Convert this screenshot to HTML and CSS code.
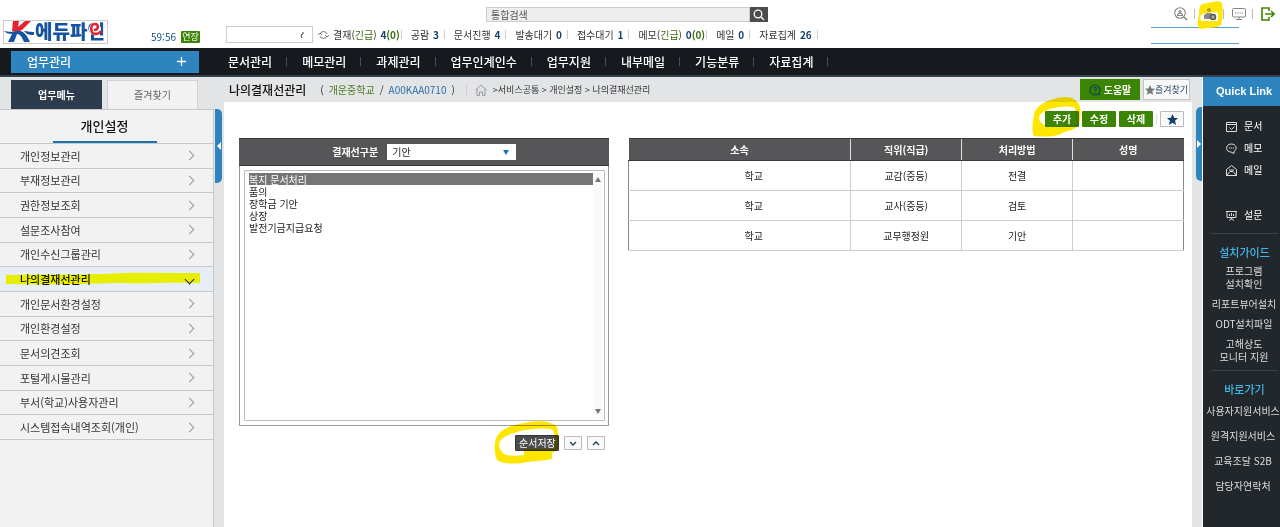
FILE: index.html
```html
<!DOCTYPE html>
<html lang="ko">

<head>
	<meta charset="UTF-8">
	<meta name="viewport" content="width=device-width, initial-scale=1.0">
	<title>나의결재선관리</title>
	<link rel="stylesheet" href="styles.css">
</head>

<body>
	<header class="top">
		<div class="brand">
			<a href="#" class="logo" aria-label="K-에듀파인">
				<svg width="105" height="24" viewBox="0 0 105 24">
					<path d="M10 1h6l-1 6 7-6h6l-9 9-5 2-5-1z" fill="#e5222f" />
					<path d="M1 11c5 1 8 1 13 0 5-1 9 2 13 11h-6c-2-5-4-8-7-8l-3 8H5l4-8c-4 0-6-1-8-3z" fill="#1553a0" />
					<path d="M21 11c3 0 5 1 10 1v3c-4 0-7 0-10-4z" fill="#1553a0" />
					<text x="32" y="19" class="logo-text">에듀파인</text>
					<circle cx="92" cy="9" r="6" fill="#fff" />
					<path d="M91 10c5 0 5-6 1-6-5 0-5 9 0 10 3 0 5-1 6-3" fill="none" stroke="#e5222f" stroke-width="2.6" />
				</svg>
			</a>
			<span class="timer">59:56</span>
			<button type="button" class="extend">연장</button>
		</div>

		<div class="top-middle">
			<form class="search">
				<input type="text" value="통합검색" aria-label="통합검색">
				<button type="button" aria-label="검색">
					<svg width="12" height="12" viewBox="0 0 12 12" fill="none" stroke="#fff" stroke-width="1.3">
						<circle cx="5" cy="5" r="3.8" />
						<path d="M8 8l3 3" />
					</svg>
				</button>
			</form>
			<div class="status">
				<button type="button" class="user-box" aria-label="사용자">
					<svg width="4" height="6" viewBox="0 0 4 6"><path d="M3 0v2L1 3l1 3" fill="none" stroke="#444" /></svg>
				</button>
				<svg class="refresh" width="11" height="10" viewBox="0 0 11 10" fill="none" stroke="#777">
					<path d="M2 4a3.7 3.7 0 0 1 7 0M9 6a3.7 3.7 0 0 1-7 0M0 5l2-2 2 2M7 5l2 2 2-2" />
				</svg>
				<ul class="counts">
					<li class="tight"><a href="#">결재(<em>긴급</em>) <b>4<i>(0)</i></b></a></li>
					<li><a href="#">공람 <b>3</b></a></li>
					<li><a href="#">문서진행 <b>4</b></a></li>
					<li><a href="#">발송대기 <b>0</b></a></li>
					<li><a href="#">접수대기 <b>1</b></a></li>
					<li class="tight"><a href="#">메모(<em>긴급</em>) <b>0<i>(0)</i></b></a></li>
					<li><a href="#">메일 <b>0</b></a></li>
					<li><a href="#">자료집계 <b>26</b></a></li>
				</ul>
			</div>
		</div>

		<div class="top-right">
			<div class="tools">
				<button type="button" aria-label="사용자 찾기">
					<svg width="14" height="14" viewBox="0 0 14 14" fill="none" stroke="#858585" stroke-width="1.1">
						<circle cx="6" cy="6" r="5.3" />
						<path d="M10 10l3 3" stroke-width="1.6" />
						<circle cx="6" cy="4.5" r="1" />
						<path d="M3.5 8.5c0-3 5-3 5 0z" />
					</svg>
				</button>
				<button type="button" class="marked" aria-label="개인설정">
					<svg class="marker-user" width="28" height="30" viewBox="0 0 28 30">
						<path d="M5 4c3-2 8-2 12-3 4-1 7-1 9 1 1 7 1 14-1 22-3 3-11 2-20 4-3-1-4-4-3-9C4 13 2 8 5 4z" fill="#ffe600" />
						<path d="M5 14c4-3 11-2 16-3 2 2 1 6 1 9H6c-2-1-2-4-1-6z" fill="#fff" />
					</svg>
					<svg class="user-icon" width="14" height="14" viewBox="0 0 14 14">
						<circle cx="6" cy="3" r="2" fill="#b39a28" />
						<path d="M1 12V8l3-2h4l3 2v4z" fill="#888" />
						<circle cx="10" cy="10" r="2.5" fill="#aaa" stroke="#555" stroke-width="1.4" />
					</svg>
				</button>
				<button type="button" aria-label="메신저">
					<svg width="14" height="14" viewBox="0 0 14 14" fill="none" stroke="#858585">
						<rect x=".5" y="1.5" width="13" height="8.5" rx="1" />
						<path d="M7 10v2.5M4 12.5h6" />
						<path d="M3 6h8" stroke-dasharray="1.3 1" />
					</svg>
				</button>
				<button type="button" aria-label="로그아웃">
					<svg width="14" height="14" viewBox="0 0 14 14" fill="none" stroke="#3f8505" stroke-width="1.6">
						<path d="M8 4V1H1v12h7v-3M4 7h9M10 4l3 3-3 3" />
					</svg>
				</button>
			</div>
			<div class="top-tab"></div>
		</div>
	</header>

	<nav class="main-nav">
		<button type="button" class="module">업무관리
			<svg width="9" height="9" viewBox="0 0 9 9"><path d="M4.5 0v9M0 4.5h9" stroke="#fff" stroke-width="1.3" /></svg>
		</button>
		<ul>
			<li><a href="#">문서관리</a></li>
			<li><a href="#">메모관리</a></li>
			<li><a href="#">과제관리</a></li>
			<li><a href="#">업무인계인수</a></li>
			<li><a href="#">업무지원</a></li>
			<li><a href="#">내부메일</a></li>
			<li><a href="#">기능분류</a></li>
			<li><a href="#">자료집계</a></li>
		</ul>
	</nav>

	<div class="page">
		<aside class="side">
			<div class="tabs">
				<button type="button" class="tab active">업무메뉴</button>
				<button type="button" class="tab">즐겨찾기</button>
			</div>
			<div class="side-body">
				<div class="menu">
					<h2><span>개인설정</span></h2>
					<ul>
						<li><a href="#">개인정보관리</a></li>
						<li><a href="#">부재정보관리</a></li>
						<li><a href="#">권한정보조회</a></li>
						<li><a href="#">설문조사참여</a></li>
						<li><a href="#">개인수신그룹관리</a></li>
						<li class="current">
							<svg class="marker-row" viewBox="0 0 194 14" preserveAspectRatio="none">
								<path d="M0 3c35-1 70 0 95-1C125 0 160 1 194 1v10c-30-1-50 1-80 0-40 1-75 2-114 1z" fill="#ffff00" />
							</svg>
							<a href="#">나의결재선관리</a>
						</li>
						<li><a href="#">개인문서환경설정</a></li>
						<li><a href="#">개인환경설정</a></li>
						<li><a href="#">문서의견조회</a></li>
						<li><a href="#">포털게시물관리</a></li>
						<li><a href="#">부서(학교)사용자관리</a></li>
						<li><a href="#">시스템접속내역조회(개인)</a></li>
					</ul>
				</div>
				<button type="button" class="fold fold-left" aria-label="메뉴 접기">
					<svg width="4" height="8" viewBox="0 0 4 8"><path d="M4 0v8L0 4z" fill="#fff" /></svg>
				</button>
			</div>
		</aside>

		<main class="content">
			<div class="title-bar">
				<h1>나의결재선관리</h1>
				<p class="org">( <a href="#" class="school">개운중학교</a> / <a href="#" class="code">A00KAA0710</a> )</p>
				<p class="crumbs">
					<svg width="12" height="12" viewBox="0 0 12 12" fill="none" stroke="#999">
						<path d="M.5 6L6 1l5.500 5M2 5v6.500h2.500V8h3v3.500H10V5" />
					</svg>
					&gt;서비스공통 &gt; 개인설정 &gt; 나의결재선관리
				</p>
				<div class="title-buttons">
					<button type="button" class="help">
						<svg width="12" height="12" viewBox="0 0 12 12" fill="none" stroke="#0b4a52" stroke-width="1.2">
							<circle cx="6" cy="6" r="5" />
							<path d="M4.500 4.800c0-2 3-2 3 0 0 1-1.500 1-1.500 2.200M6 8v1.200M9 9.500l2 1.800" />
						</svg>
						도움말
					</button>
					<button type="button" class="favorite">
						<svg width="10" height="10" viewBox="0 0 20 20"><path d="M10 0l3 7 7 .5-5.500 4.800L16.500 20 10 15.800 3.500 20l2-7.700L0 7.500 7 7z" fill="#777" /></svg>즐겨찾기
					</button>
				</div>
			</div>

			<div class="actions">
				<span class="marked">
					<button type="button" class="green">추가</button>
					<svg class="marker-add" width="52" height="42" viewBox="0 0 52 42">
						<path fill-rule="evenodd" d="M3 19C5 8 20 2 34 1c7 0 13 3 15 10 1 7 1 13-2 19-5 5-11 4-17 8-8 3-16 3-27 2C0 34 2 26 3 19zM8 22c0-5 8-9 16-10 8-2 15-2 20 0l1 17c-10 1-20 2-30 1-4-2-7-5-7-8z" fill="#ffe600" />
					</svg>
				</span>
				<button type="button" class="green">수정</button>
				<button type="button" class="green">삭제</button>
				<span class="divider"></span>
				<button type="button" class="star" aria-label="즐겨찾기 추가">
					<svg width="11" height="11" viewBox="0 0 20 20"><path d="M10 0l3 7 7 .5-5.500 4.800L16.500 20 10 15.800 3.500 20l2-7.700L0 7.500 7 7z" fill="#123f6b" /></svg>
				</button>
			</div>

			<div class="panels">
				<section>
					<div class="line-panel">
						<div class="line-head">
							<label for="line-type">결재선구분</label>
							<span class="dropdown">
								<select id="line-type">
									<option>기안</option>
								</select>
								<svg width="6" height="5" viewBox="0 0 6 5"><path d="M0 0h6L3 5z" fill="#1576b5" /></svg>
							</span>
						</div>
						<div class="line-list">
							<select size="5" aria-label="결재선 목록">
								<option selected>복지 문서처리</option>
								<option>품의</option>
								<option>장학금 기안</option>
								<option>상장</option>
								<option>발전기금지급요청</option>
							</select>
							<div class="scroll">
								<svg width="6" height="5" viewBox="0 0 6 5"><path d="M0 5h6L3 0z" fill="#777" /></svg>
								<svg width="6" height="5" viewBox="0 0 6 5"><path d="M0 0h6L3 5z" fill="#777" /></svg>
							</div>
						</div>
					</div>
					<div class="order">
						<span class="marked">
							<button type="button" class="save">순서저장</button>
							<svg class="marker-save" width="66" height="44" viewBox="0 0 66 44">
								<path fill-rule="evenodd" d="M1 22C2 10 16 4 30 2 44-1 58 0 63 6c2 6 1 13 1 21-3 4-5 4-6 5v6c-10 2-20 2-30 4-9 1-20 1-25-3-2-5-3-11-2-17zM5 24c0-7 10-11 21-14 12-2 25-4 33-1 2 3 2 12 1 19H30v6c-7 1-16 1-20-1-3-3-5-6-5-9z" fill="#ffe600" />
							</svg>
						</span>
						<button type="button" class="move" aria-label="아래로">
							<svg width="8" height="5" viewBox="0 0 8 5"><path d="M1 1l3 3 3-3" fill="none" stroke="#123f6b" stroke-width="1.3" /></svg>
						</button>
						<button type="button" class="move" aria-label="위로">
							<svg width="8" height="5" viewBox="0 0 8 5"><path d="M1 4l3-3 3 3" fill="none" stroke="#123f6b" stroke-width="1.3" /></svg>
						</button>
					</div>
				</section>

				<table class="members">
					<thead>
						<tr>
							<th class="wide">소속</th>
							<th>직위(직급)</th>
							<th>처리방법</th>
							<th>성명</th>
						</tr>
					</thead>
					<tbody>
						<tr><td>학교</td><td>교감(중등)</td><td>전결</td><td></td></tr>
						<tr><td>학교</td><td>교사(중등)</td><td>검토</td><td></td></tr>
						<tr><td>학교</td><td>교무행정원</td><td>기안</td><td></td></tr>
					</tbody>
				</table>
			</div>
		</main>

		<div class="gutter">
			<button type="button" class="fold fold-right" aria-label="퀵링크 접기">
				<svg width="4" height="8" viewBox="0 0 4 8"><path d="M0 0v8l4-4z" fill="#fff" /></svg>
			</button>
		</div>

		<aside class="quick">
			<h2>Quick Link</h2>
			<ul class="quick-icons">
				<li><a href="#">
					<svg width="11" height="11" viewBox="0 0 11 11" fill="none" stroke="#ddd"><path d="M.5 1.500h10v9H.5zM.5 3.500h10M3.500 6.500l2 2 3-3" /></svg>문서</a></li>
				<li><a href="#">
					<svg width="11" height="11" viewBox="0 0 11 11" fill="none" stroke="#ddd"><path d="M5.500 1C-1 1-1 9 5 9l3 1.500V8.500C12 6 10 1 5.500 1z" /><path d="M3 5h5" stroke-dasharray="1.200 .7" /></svg>메모</a></li>
				<li><a href="#">
					<svg width="11" height="11" viewBox="0 0 11 11" fill="none" stroke="#ddd"><path d="M.5 4.500l5-4 5 4v6H.5zM.5 10.500l3.500-4h3l3.500 4M3 5h5" /></svg>메일</a></li>
				<li class="survey"><a href="#">
					<svg width="11" height="11" viewBox="0 0 11 11" fill="none" stroke="#ddd"><path d="M0 1.500h11M1 1.500v6h9v-6M5.500 7.500v2M3 10.500l2.500-2 2.500 2M3.500 6V4M5.500 6V3M7.500 6V4" /></svg>설문</a></li>
			</ul>
			<h3>설치가이드</h3>
			<ul class="guide">
				<li><a href="#">프로그램<br>설치확인</a></li>
				<li><a href="#">리포트뷰어설치</a></li>
				<li><a href="#">ODT설치파일</a></li>
				<li><a href="#">고해상도<br>모니터 지원</a></li>
			</ul>
			<h3>바로가기</h3>
			<ul class="shortcuts">
				<li><a href="#">사용자지원서비스</a></li>
				<li><a href="#">원격지원서비스</a></li>
				<li><a href="#">교육조달 S2B</a></li>
				<li><a href="#">담당자연락처</a></li>
			</ul>
		</aside>
	</div>
</body>

</html>
```

FILE: styles.css
```css
:root {
	--blue: #2e84bf;
	--green: #3c8404;
	--dark: #161a1f;
	--panel: #22272c;
	--head: #565658;
	--gray: #e2e4e6;
	--side-width: 224px;
}

* {
	box-sizing: border-box;
}

body {
	display: flex;
	flex-direction: column;
	min-height: 100vh;
	margin: 0;
	font-family: "Noto Sans CJK KR", "Noto Sans", sans-serif;
	font-size: 10px;
	line-height: 12px;
	color: #333;
	background: #fff;
}

h1,
h2,
h3,
p,
ul {
	margin: 0;
	padding: 0;
	list-style: none;
}

a {
	color: inherit;
	text-decoration: none;
}

button,
input,
select {
	margin: 0;
	padding: 0;
	border: 0;
	border-radius: 0;
	background: none;
	font: inherit;
	color: inherit;
}

button {
	cursor: pointer;
}

svg {
	flex: none;
}

/* Header */
.top {
	display: grid;
	grid-template-columns: var(--side-width) 1fr 250px;
	height: 48px;
}

.brand {
	display: flex;
	align-items: flex-end;
	padding: 0 24px 4px 3px;
}

.logo {
	display: flex;
	border: 1px solid #ccc;
	margin-right: auto;
}

.logo svg {
	margin: -1px;
	overflow: visible;
}

.logo-text {
	font-size: 19px;
	font-weight: 900;
	fill: #1553a0;
}

.timer {
	margin-right: 5px;
	color: #14508a;
	line-height: 14px;
}

.extend {
	width: 19px;
	height: 12px;
	margin-bottom: 1px;
	border-radius: 1px;
	background: var(--green);
	color: #fff;
	font-size: 9px;
	line-height: 12px;
}

.top-middle {
	display: flex;
	flex-direction: column;
	padding-top: 7px;
}

.search {
	display: flex;
	align-self: center;
	width: 282px;
	height: 15px;
}

.search input {
	flex: 1;
	min-width: 0;
	padding-left: 4px;
	border: 1px solid #ccc;
	background: #eee;
	color: #555;
}

.search button {
	display: flex;
	align-items: center;
	justify-content: center;
	width: 18px;
	background: #4c4c4f;
}

.status {
	display: flex;
	align-items: center;
	margin-top: 4px;
	padding-left: 2px;
	white-space: nowrap;
}

.user-box {
	display: flex;
	align-items: center;
	justify-content: flex-end;
	width: 87px;
	height: 17px;
	padding-right: 8px;
	border: 1px solid #ccc;
}

.refresh {
	margin: 0 4px 0 5px;
}

.counts {
	display: flex;
	gap: 9px;
}

.counts li {
	padding-right: 5px;
	border-right: 1px solid #ccc;
	line-height: 9px;
}

.counts .tight {
	padding-right: 1px;
}

.counts em,
.counts i {
	font-style: normal;
	color: #3c6b10;
}

.counts b {
	margin-left: 1px;
	color: #15406b;
}

.top-right {
	display: flex;
	flex-direction: column;
	align-items: flex-end;
	padding: 7px 5px 0 0;
}

.tools {
	display: flex;
	align-items: center;
}

.tools button {
	display: flex;
}

.tools button + button {
	margin-left: 6px;
	padding-left: 9px;
	background: linear-gradient(#bbb, #bbb) no-repeat 0 center / 1px 10px;
}

.top-tab {
	width: 88px;
	height: 17px;
	margin: 6px 36px 0 0;
	border: 1px solid #5b9cc8;
	border-width: 1px 0;
}

/* Main navigation */
.main-nav {
	display: flex;
	align-items: center;
	height: 29px;
	border-bottom: 2px solid #34424f;
	background: var(--dark);
	color: #fff;
	font-size: 12px;
	font-weight: 500;
}

.module {
	display: flex;
	align-items: center;
	justify-content: space-between;
	width: 188px;
	height: 22px;
	margin: 0 25px 0 11px;
	padding: 0 13px 0 16px;
	background: var(--blue);
}

.main-nav ul {
	display: flex;
	padding-left: 4px;
}

.main-nav li {
	padding-right: 15px;
	margin-right: 15px;
	background: linear-gradient(#46505a, #46505a) no-repeat right center / 1px 9px;
	line-height: 16px;
}

/* Page */
.page {
	flex: 1;
	display: flex;
	background: var(--gray);
}

.side {
	flex: none;
	display: flex;
	flex-direction: column;
	width: var(--side-width);
}

.tabs {
	display: flex;
	gap: 5px;
	padding: 3px 0 0 11px;
}

.tab {
	width: 91px;
	height: 29px;
	border: 1px solid #d2d2d2;
	border-bottom: 0;
	background: #f2f2f2;
	color: #666;
}

.tab.active {
	border-color: #2c3b4e;
	background: #2c3b4e;
	color: #fff;
	font-weight: bold;
}

.side-body {
	flex: 1;
	display: flex;
}

.menu {
	width: 214px;
	border: solid #c8c8c8;
	border-width: 1px 1px 0 0;
	background: #f2f2f2;
	font-size: 11px;
}

.menu h2 {
	display: flex;
	justify-content: center;
	height: 33px;
	padding-right: 4px;
	font-size: 13px;
	font-weight: 500;
	line-height: 32px;
	color: #111;
}

.menu h2 span {
	width: 104px;
	border-bottom: 2px solid #1b76ae;
	text-align: center;
}

/* rows share the height evenly */
.menu ul {
	display: grid;
	grid-auto-rows: 1fr;
	min-height: 297px;
	border-bottom: 1px solid #c8c8c8;
}

.menu li {
	position: relative;
	display: flex;
	border-top: 1px solid #c8c8c8;
}

.menu li a {
	flex: 1;
	display: flex;
	align-items: center;
	justify-content: space-between;
	padding: 0 20px;
}

.menu li a::after {
	content: "";
	width: 6px;
	height: 6px;
	border: solid #999;
	border-width: 1px 1px 0 0;
	transform: rotate(45deg);
}

.menu .current {
	background: #e8eef8;
	color: #111;
	font-weight: 500;
}

.menu .current a::after {
	border-color: #222;
	transform: rotate(135deg);
}

.fold {
	display: flex;
	align-items: center;
	justify-content: center;
	width: 7px;
	height: 74px;
	background: var(--blue);
}

.fold-left {
	margin-left: 1px;
	border-radius: 0 5px 5px 0;
}

.fold-right {
	margin: 30px 0 0 4px;
	border-radius: 5px 0 0 5px;
}

/* Content */
.content {
	flex: 1;
	min-width: 0;
	background: #fff;
}

.title-bar {
	display: flex;
	align-items: center;
	height: 25px;
	padding-left: 5px;
	background: var(--gray);
	white-space: nowrap;
}

h1 {
	font-size: 12px;
	font-weight: 500;
	line-height: 16px;
	color: #111;
}

.org {
	display: flex;
	gap: 5px;
	margin-left: 14px;
}

.school {
	color: #47791f;
}

.code {
	color: #2a6fa8;
}

.crumbs {
	display: flex;
	align-items: center;
	gap: 6px;
	margin-left: 11px;
	padding-left: 8px;
	border-left: 1px solid #d2d2d2;
	font-size: 9px;
}

.title-buttons {
	display: flex;
	gap: 3px;
	margin-left: auto;
	padding-right: 2px;
}

.help,
.favorite {
	display: flex;
	align-items: center;
	justify-content: center;
	height: 21px;
}

.help {
	gap: 3px;
	width: 60px;
	background: var(--green);
	color: #fff;
	font-weight: bold;
}

.favorite {
	width: 47px;
	border: 1px solid #c4c4c4;
	background: #f8f8f8;
	color: #254b70;
	font-size: 9px;
}

.actions {
	display: flex;
	align-items: center;
	justify-content: flex-end;
	gap: 3px;
	padding: 9px 8px 11px;
}

.green {
	width: 34px;
	height: 16px;
	border-radius: 1px;
	background: var(--green);
	color: #fff;
	font-weight: bold;
}

.divider {
	width: 1px;
	height: 10px;
	background: #ddd;
}

.star,
.move {
	display: flex;
	align-items: center;
	justify-content: center;
	border: 1px solid #bbb;
	border-radius: 1px;
	background: #f9f9f9;
}

.star {
	width: 24px;
	height: 16px;
}

.panels {
	display: grid;
	grid-template-columns: 2fr 3fr;
	gap: 19px;
	align-items: start;
	padding: 0 8px 0 15px;
}

.line-panel {
	border: 1px solid #999;
	border-top: 0;
}

.line-head {
	display: flex;
	align-items: center;
	justify-content: center;
	gap: 9px;
	height: 28px;
	margin: 0 -1px;
	border: solid #39393b;
	border-width: 1px 0;
	background: var(--head);
	color: #fff;
	font-weight: bold;
}

.dropdown {
	display: flex;
	align-items: center;
	width: 129px;
	height: 16px;
	padding-right: 7px;
	background: #fff;
	color: #222;
	font-weight: normal;
}

.dropdown select {
	flex: 1;
	height: 16px;
	padding-left: 5px;
	appearance: none;
}

.line-list {
	display: flex;
	height: 251px;
	margin: 4px 3px 4px 4px;
	padding: 2px 1px 2px 4px;
	border: 1px solid #bbb;
	border-radius: 1px;
}

.line-list select {
	flex: 1;
	min-width: 0;
	overflow: hidden;
	outline: 0;
	color: #222;
}

.line-list option {
	display: flex;
	align-items: center;
	height: 12px;
	min-height: 12px;
	padding: 0;
}

.line-list option:checked {
	background-image: linear-gradient(#757575, #757575);
	-webkit-text-fill-color: #fff;
}

.scroll {
	display: flex;
	flex-direction: column;
	align-items: center;
	justify-content: space-between;
	width: 10px;
	padding: 4px 0;
	background: #fafafa;
}

.order {
	display: flex;
	align-items: center;
	justify-content: flex-end;
	gap: 5px;
	padding: 9px 4px;
}

.save {
	width: 44px;
	height: 16px;
	border: 1px solid #333;
	border-radius: 1px;
	background: #4c4c4f;
	color: #fff;
	line-height: 12px;
}

.move {
	width: 18px;
	height: 14px;
}

.members {
	width: 100%;
	border-collapse: collapse;
	table-layout: fixed;
	color: #222;
	text-align: center;
}

.members th {
	height: 22px;
	padding: 0;
	border: solid #39393b;
	border-width: 1px 0;
	background: var(--head);
	color: #fff;
}

.members th + th {
	border-left: 1px solid #ddd;
}

.members .wide {
	width: 40%;
}

.members td {
	height: 30px;
	padding: 0;
	border: 1px solid #ccc;
}

.members td:first-child {
	padding-left: 28px;
	border-left-color: #888;
}

.members td:last-child {
	border-right-color: #888;
}

.gutter {
	flex: none;
	width: 11px;
	border-right: 1px solid #fff;
}

.fold-right {
	width: 6px;
}

/* Quick link */
.quick {
	flex: none;
	width: 77px;
	background: var(--panel);
	color: #ddd;
	text-align: center;
	white-space: nowrap;
}

.quick h2 {
	padding-left: 5px;
	background: var(--blue);
	color: #fff;
	font-family: "Liberation Sans", Arial, sans-serif;
	font-size: 11px;
	line-height: 29px;
}

.quick-icons {
	padding: 9px 0 7px 23px;
	color: #fff;
}

.quick-icons a {
	display: flex;
	align-items: center;
	gap: 7px;
	height: 22px;
}

.quick-icons .survey {
	margin-top: 23px;
}

.quick h3 {
	margin: 0 2px 0 8px;
	padding-top: 11px;
	border-top: 1px solid #3a4046;
	color: #41b5e6;
	font-size: 11px;
	font-weight: 500;
	line-height: 14px;
}

.guide {
	display: flex;
	flex-direction: column;
	gap: 7px;
	padding: 5px 0 7px 5px;
	line-height: 13px;
}

.shortcuts {
	display: flex;
	flex-direction: column;
	gap: 13px;
	padding: 9px 0 9px 3px;
}

/* Highlighter marks */
.marked {
	position: relative;
	display: flex;
}

.marker-user,
.marker-add,
.marker-save,
.marker-row {
	position: absolute;
	mix-blend-mode: multiply;
	pointer-events: none;
}

.marker-user {
	top: -6px;
	left: 2px;
	mix-blend-mode: normal;
}

.user-icon {
	position: relative;
}

.marker-add {
	top: -15px;
	left: -14px;
}

.marker-save {
	top: -14px;
	left: -21px;
}

.marker-row {
	top: 5px;
	left: 6px;
	width: 194px;
	height: 14px;
}
```
